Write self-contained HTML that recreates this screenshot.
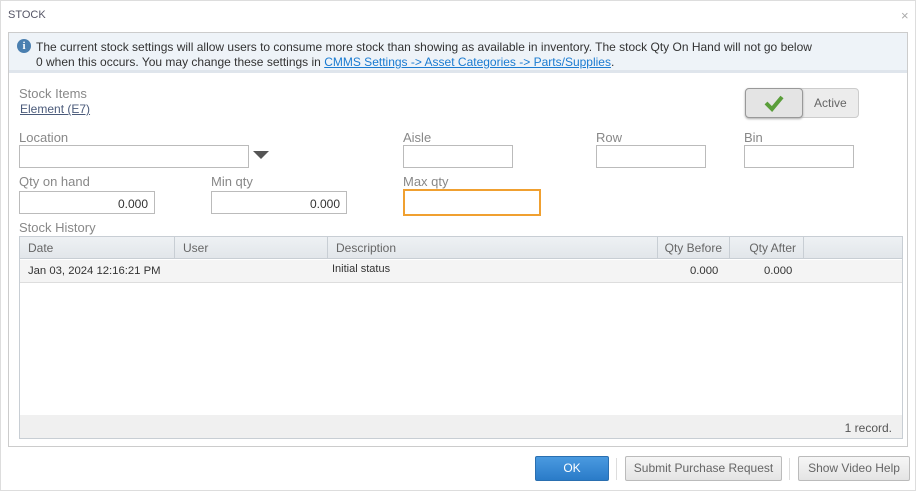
<!DOCTYPE html><html><head><style>
*{box-sizing:border-box}
body{margin:0;width:916px;height:491px;background:#fff;font-family:"Liberation Sans",sans-serif;font-size:12px;color:#333;position:relative;overflow:hidden}
.a{position:absolute;white-space:nowrap}
.lbl{position:absolute;color:#888;font-size:13px}
.in{position:absolute;border:1px solid #bbb;background:#fff;height:23px;text-align:right;padding:5px 6px;font-size:12px;color:#333}
.th{position:absolute;top:0;height:22px;line-height:22px;padding-left:8px;color:#666;border-right:1px solid #c8ced4;white-space:nowrap;overflow:hidden}
.btn{position:absolute;top:456px;height:25px;border:1px solid #bbb;border-radius:2px;background:linear-gradient(#f6f6f6,#e4e4e4);color:#666;text-align:center;line-height:23px;font-size:12px}
</style></head><body>
<div class="a" style="left:0;top:0;width:916px;height:491px;border:1px solid #ddd"></div>
<div class="a" style="left:8px;top:9px;font-size:11px;color:#556">STOCK</div>
<div class="a" style="left:901px;top:8px;color:#aaa;font-size:13px">×</div>
<div class="a" style="left:8px;top:32px;width:900px;height:415px;border:1px solid #ccc"></div>
<div class="a" style="left:9px;top:33px;width:898px;height:40px;background:#eef3f8;border-bottom:3px solid #dfe5ec"></div>
<div class="a" style="left:17px;top:39px;width:14px;height:14px;border-radius:50%;background:#4a7fb0;color:#fff;font-size:11px;font-weight:bold;text-align:center;line-height:14px;font-family:'Liberation Serif',serif">i</div>
<div class="a" style="left:36px;top:40px;line-height:15px;color:#333;font-size:12px">The current stock settings will allow users to consume more stock than showing as available in inventory. The stock Qty On Hand will not go below<br>0 when this occurs. You may change these settings in <span style="color:#1a7bd1;text-decoration:underline">CMMS Settings -&gt; Asset Categories -&gt; Parts/Supplies</span>.</div>
<div class="lbl" style="left:19px;top:86px">Stock Items</div>
<div class="a" style="left:20px;top:102px;color:#4a5a7a;text-decoration:underline">Element (E7)</div>
<div class="a" style="left:745px;top:88px;width:114px;height:30px;border:1px solid #ccc;border-radius:4px;background:#ececec"></div>
<div class="a" style="left:745px;top:88px;width:58px;height:30px;border:1px solid #999;border-radius:4px;background:#e4e4e4;box-shadow:0 1px 2px #aaa"></div>
<svg class="a" style="left:763px;top:94px" width="22" height="18"><path d="M3 9 L9 15 L19 3" stroke="#5a9e3a" stroke-width="4" fill="none"/></svg>
<div class="a" style="left:814px;top:96px;color:#666">Active</div>
<div class="lbl" style="left:19px;top:130px">Location</div>
<div class="in" style="left:19px;top:145px;width:230px"></div>
<div class="a" style="left:253px;top:151px;width:0;height:0;border-left:8px solid transparent;border-right:8px solid transparent;border-top:8px solid #555"></div>
<div class="lbl" style="left:403px;top:130px">Aisle</div><div class="in" style="left:403px;top:145px;width:110px"></div>
<div class="lbl" style="left:596px;top:130px">Row</div><div class="in" style="left:596px;top:145px;width:110px"></div>
<div class="lbl" style="left:744px;top:130px">Bin</div><div class="in" style="left:744px;top:145px;width:110px"></div>
<div class="lbl" style="left:19px;top:174px">Qty on hand</div><div class="in" style="left:19px;top:191px;width:136px">0.000</div>
<div class="lbl" style="left:211px;top:174px">Min qty</div><div class="in" style="left:211px;top:191px;width:136px">0.000</div>
<div class="lbl" style="left:403px;top:174px">Max qty</div><div class="in" style="left:403px;top:189px;width:138px;height:27px;border:2px solid #f0a030"></div>
<div class="lbl" style="left:19px;top:220px">Stock History</div>
<div class="a" style="left:19px;top:236px;width:884px;height:203px;border:1px solid #c8ced4;background:#fff">
<div class="a" style="left:0;top:0;width:882px;height:22px;background:linear-gradient(#eef1f4,#e2e6ea);border-bottom:1px solid #c8ced4"></div>
<div class="th" style="left:0;width:155px">Date</div>
<div class="th" style="left:155px;width:153px">User</div>
<div class="th" style="left:308px;width:330px">Description</div>
<div class="th" style="left:638px;width:72px;text-align:right;padding:0 7px 0 0">Qty Before</div>
<div class="th" style="left:710px;width:74px;text-align:right;padding:0 7px 0 0">Qty After</div>
<div class="a" style="left:0;top:23px;width:882px;height:23px;background:#f4f4f4;border-bottom:1px solid #ddd"></div>
<div class="a" style="left:8px;top:28px;font-size:11.3px">Jan 03, 2024 12:16:21 PM</div>
<div class="a" style="left:312px;top:26px;font-size:11px">Initial status</div>
<div class="a" style="left:670px;top:28px;font-size:11.3px">0.000</div>
<div class="a" style="left:744px;top:28px;font-size:11.3px">0.000</div>
<div class="a" style="left:0;top:178px;width:882px;height:23px;background:#f0f0f0"></div>
<div class="a" style="right:10px;top:184px;color:#555">1 record.</div>
</div>
<div class="btn" style="left:535px;width:74px;background:linear-gradient(#4a9ae0,#2a7bc8);border-color:#2a6fb0;color:#fff">OK</div>
<div class="a" style="left:616px;top:458px;width:1px;height:22px;background:#ddd"></div>
<div class="btn" style="left:625px;width:157px">Submit Purchase Request</div>
<div class="a" style="left:789px;top:458px;width:1px;height:22px;background:#ddd"></div>
<div class="btn" style="left:798px;width:112px">Show Video Help</div>
</body></html>
